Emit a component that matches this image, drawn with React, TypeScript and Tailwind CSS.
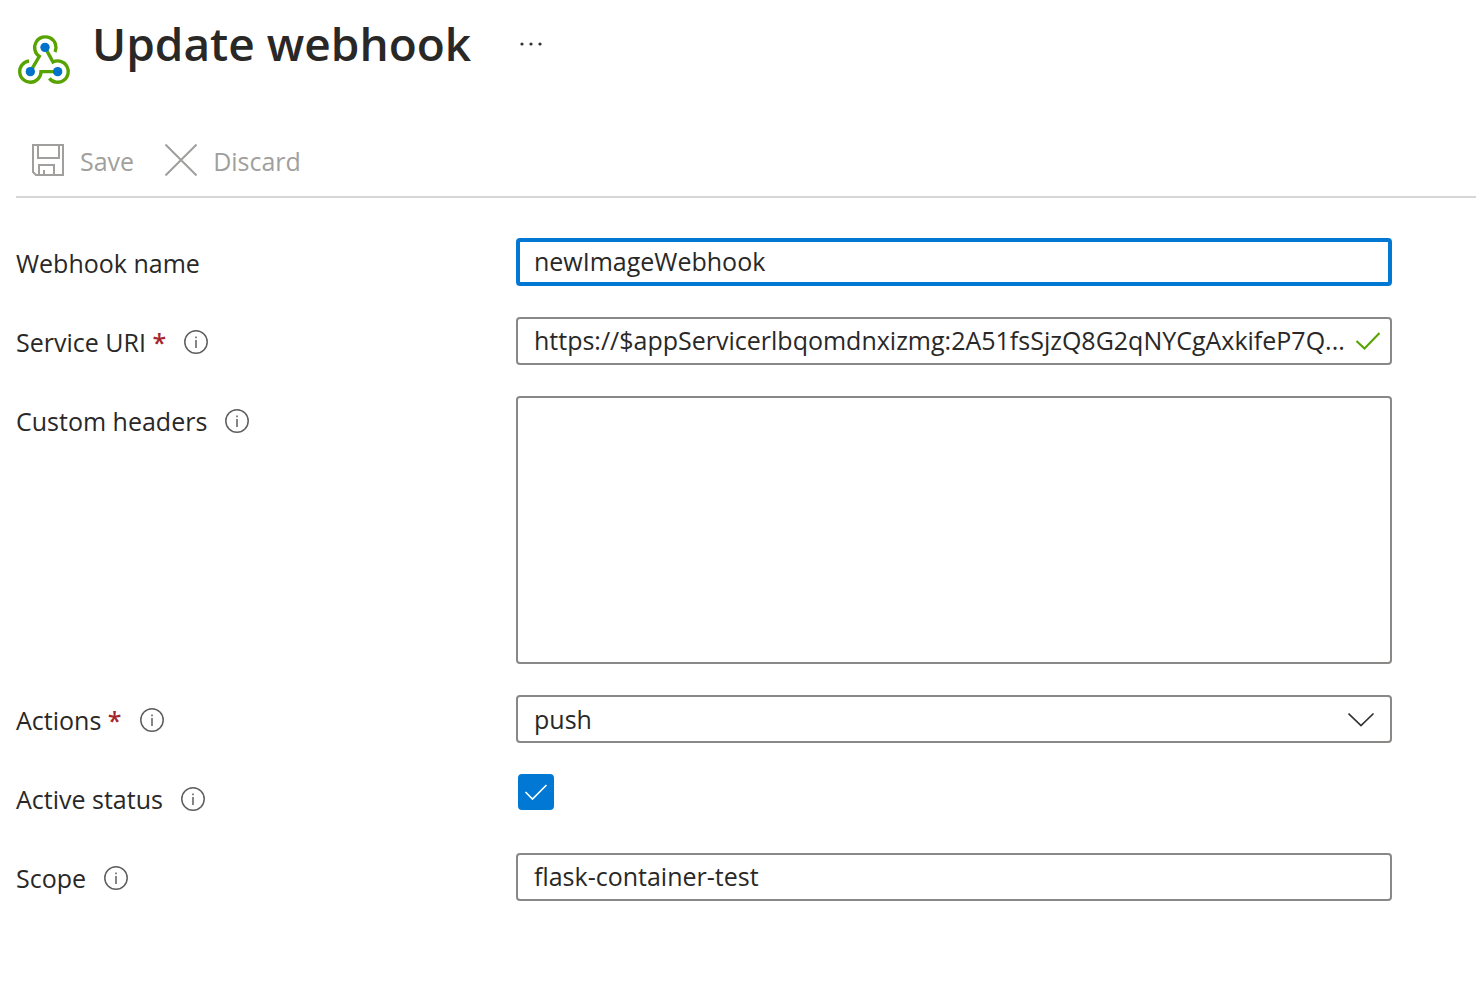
import { useState, type ReactNode } from "react";

const fieldClass =
  "block w-full rounded-sm border-2 border-[#8a8886] bg-white pl-4 text-[25px] text-[#292827] outline-none";

function WebhookIcon() {
  return (
    <svg
      className="h-[52px] w-14 shrink-0"
      viewBox="18 24 168 156"
      fill="none"
      aria-hidden="true"
    >
      <g stroke="#57a300" strokeWidth="10">
        <path d="M135 81A32 32 0 1 0 88 94L61 140" />
        <path d="M57 108A32 32 0 1 0 93 140H143" />
        <path d="M118 160A32 32 0 1 0 129 111L105 67" />
      </g>
      <g fill="#0072c9">
        <circle cx="105" cy="67" r="14" />
        <circle cx="61" cy="140" r="14" />
        <circle cx="143" cy="140" r="14" />
      </g>
    </svg>
  );
}

function SaveIcon() {
  return (
    <svg
      className="size-8"
      viewBox="0 0 32 32"
      fill="none"
      stroke="currentColor"
      strokeWidth="2"
      aria-hidden="true"
    >
      <path d="M1 1H31V31H4L1 28Z" />
      <path d="M6 1V14H27V1" />
      <path d="M7 31V21H22V31M12 26V31" />
    </svg>
  );
}

function DiscardIcon() {
  return (
    <svg
      className="size-8"
      viewBox="0 0 32 32"
      fill="none"
      stroke="currentColor"
      strokeWidth="2"
      aria-hidden="true"
    >
      <path d="M0.500 0.500L31.500 31.500M31.500 0.500L0.500 31.500" />
    </svg>
  );
}

function InfoIcon() {
  return (
    <svg
      className="size-6"
      viewBox="0 0 24 24"
      fill="none"
      stroke="#605e5c"
      aria-hidden="true"
    >
      <circle cx="12" cy="12" r="11.2" strokeWidth="1.5" />
      <path d="M12 10V18M12 6.5V8.2" strokeWidth="1.5" />
    </svg>
  );
}

type RowProps = {
  id: string;
  label: string;
  required?: boolean;
  info?: boolean;
  children: ReactNode;
};

function Row({ id, label, required, info, children }: RowProps) {
  return (
    <div className="grid grid-cols-[500px_1fr] items-start">
      <div className="flex h-12 items-center">
        <label htmlFor={id} className="pt-0.5">
          {label}
          {required && <span className="font-semibold text-[#a4262c]"> *</span>}
        </label>
        {info && (
          <button type="button" aria-label={`About ${label}`} className="mt-0.5 ml-[18px]">
            <InfoIcon />
          </button>
        )}
      </div>
      <div className="relative">{children}</div>
    </div>
  );
}

export default function App() {
  const [name, setName] = useState("newImageWebhook");
  const [uri, setUri] = useState(
    "https://$appServicerlbqomdnxizmg:2A51fsSjzQ8G2qNYCgAxkifeP7Q...",
  );
  const [headers, setHeaders] = useState("");
  const [active, setActive] = useState(true);
  const [scope, setScope] = useState("flask-container-test");

  return (
    <div className="min-h-screen bg-white pl-4 font-['Open_Sans','Noto_Sans',sans-serif] text-[25px] leading-8 text-[#292827]">
      <header className="flex items-start pt-4">
        <div className="pt-[17px]">
          <WebhookIcon />
        </div>
        <h1 className="ml-5 text-[46px] leading-[54px] font-semibold">Update webhook</h1>
        <button type="button" aria-label="More actions" className="mt-4 ml-12">
          <svg className="h-6 w-6" viewBox="0 0 24 24" fill="#323130" aria-hidden="true">
            <circle cx="3" cy="12" r="1.6" />
            <circle cx="12" cy="12" r="1.6" />
            <circle cx="21" cy="12" r="1.6" />
          </svg>
        </button>
      </header>

      <div className="mt-[39px] flex h-[74px] items-center gap-[31px] border-b-2 border-[#d6d6d6] pl-4 text-[#a19f9d]">
        <button type="button" className="flex items-center gap-4">
          <SaveIcon />
          <span className="pt-0.5">Save</span>
        </button>
        <button type="button" className="flex items-center gap-4">
          <DiscardIcon />
          <span className="pt-0.5">Discard</span>
        </button>
      </div>

      <form className="flex flex-col gap-[31px] pt-10 pr-[84px]">
        <Row id="name" label="Webhook name">
          <input
            id="name"
            type="text"
            value={name}
            onChange={(e) => setName(e.target.value)}
            className="block h-12 w-full rounded-sm border-4 border-[#0078d4] bg-white px-3.5 pb-0.5 text-[25px] outline-none"
          />
        </Row>

        <Row id="uri" label="Service URI" required info>
          <input
            id="uri"
            type="text"
            value={uri}
            onChange={(e) => setUri(e.target.value)}
            className={`${fieldClass} h-12 pr-9 pb-0.5 text-ellipsis`}
          />
          <svg
            className="pointer-events-none absolute top-3 right-3 size-6"
            viewBox="0 0 24 24"
            fill="none"
            stroke="#57a300"
            strokeWidth="2"
            aria-hidden="true"
          >
            <path d="M0.500 12L8.500 19.500L23.500 4" />
          </svg>
        </Row>

        <Row id="headers" label="Custom headers" info>
          <textarea
            id="headers"
            value={headers}
            onChange={(e) => setHeaders(e.target.value)}
            className={`${fieldClass} h-[268px] resize-none py-2 pr-4`}
          />
        </Row>

        <Row id="actions" label="Actions" required info>
          <select id="actions" className={`${fieldClass} h-12 appearance-none pr-12`}>
            <option>push</option>
          </select>
          <svg
            className="pointer-events-none absolute top-4 right-4 h-4 w-7"
            viewBox="0 0 28 16"
            fill="none"
            stroke="#323130"
            strokeWidth="1.7"
            aria-hidden="true"
          >
            <path d="M0.500 2.500L13 14.500L25.500 2.500" />
          </svg>
        </Row>

        <Row id="active" label="Active status" info>
          <input
            id="active"
            type="checkbox"
            checked={active}
            onChange={(e) => setActive(e.target.checked)}
            className="ml-0.5 block size-9 appearance-none rounded-sm border-2 border-[#8a8886] checked:border-[#0078d4] checked:bg-[#0078d4]"
          />
          {active && (
            <svg
              className="pointer-events-none absolute top-1.5 left-2 size-6"
              viewBox="0 0 24 24"
              fill="none"
              stroke="#ffffff"
              strokeWidth="1.6"
              aria-hidden="true"
            >
              <path d="M1.500 12L8.500 19L22.500 5" />
            </svg>
          )}
        </Row>

        <Row id="scope" label="Scope" info>
          <input
            id="scope"
            type="text"
            value={scope}
            onChange={(e) => setScope(e.target.value)}
            className={`${fieldClass} h-12 pr-4 pb-0.5`}
          />
        </Row>
      </form>
    </div>
  );
}
